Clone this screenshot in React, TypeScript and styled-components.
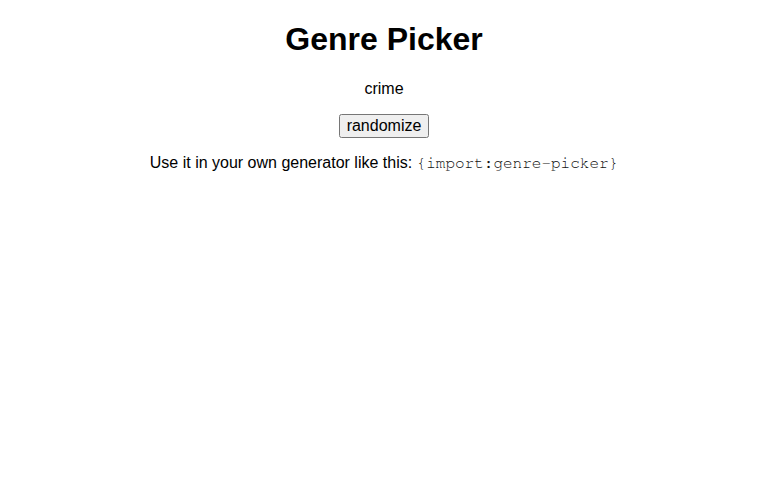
import React, { useState } from 'react';
import styled, { createGlobalStyle } from 'styled-components';

const genres = ['crime', 'fantasy', 'horror', 'mystery', 'romance', 'science fiction', 'thriller', 'western'];

const GlobalStyle = createGlobalStyle`
  body {
    margin: 0;
    background: #fff;
    color: #000;
    font-family: "Liberation Sans", Arial, sans-serif;
    font-size: 16px;
  }
`;

const Page = styled.div`
  text-align: center;
`;

const Title = styled.h1`
  font-size: 32px;
  font-weight: bold;
  margin: 21px 0 22px;
`;

const Output = styled.p`
  margin: 17px 0 16px;
`;

const Button = styled.button`
  font-family: "Liberation Sans", Arial, sans-serif;
  font-size: 16px;
`;

const Hint = styled.p`
  margin: 16px 0;
`;

const Code = styled.code`
  font-family: "Nimbus Mono PS", "Nimbus Mono L", FreeMono, Courier, "Liberation Mono", monospace;
  font-size: 16px;
  color: #111;
`;

const App: React.FC = () => {
  const [genre, setGenre] = useState('crime');
  const randomize = () => setGenre(genres[Math.floor(Math.random() * genres.length)]);

  return (
    <Page>
      <GlobalStyle />
      <Title>Genre Picker</Title>
      <Output>{genre}</Output>
      <Button onClick={randomize}>randomize</Button>
      <Hint>
        Use it in your own generator like this: <Code>{'{import:genre-picker}'}</Code>
      </Hint>
    </Page>
  );
};

export default App;
